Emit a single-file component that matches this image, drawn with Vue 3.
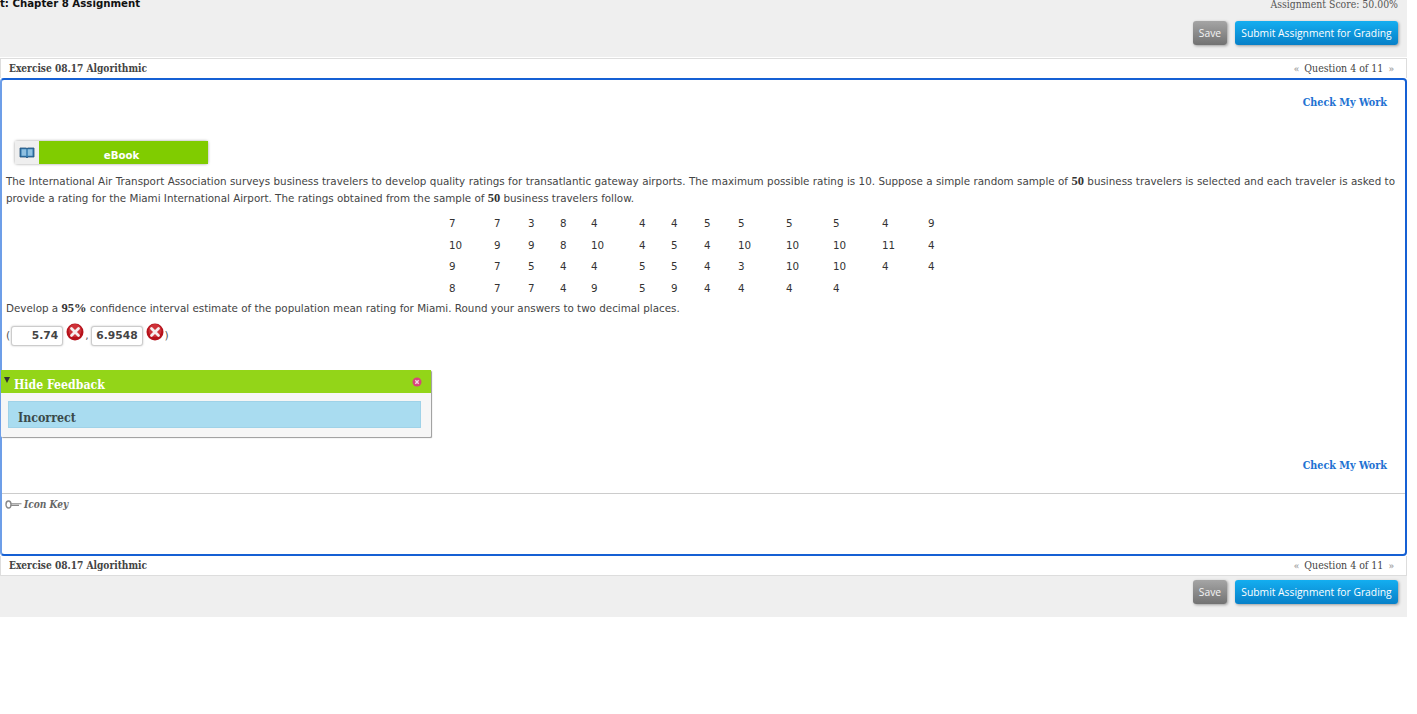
<script setup>
const rows = [
  ['7','7','3','8','4','4','4','5','5','5','5','4','9'],
  ['10','9','9','8','10','4','5','4','10','10','10','11','4'],
  ['9','7','5','4','4','5','5','4','3','10','10','4','4'],
  ['8','7','7','4','9','5','9','4','4','4','4','','']
]
const colWidths = [45,34,32,31,48,32,33,34,48,47,49,46,30]
</script>

<template>
  <div class="page">
    <header class="band top">
      <div class="title-row">
        <span class="assignment">t: Chapter 8 Assignment</span>
        <span class="score">Assignment Score: 50.00%</span>
      </div>
      <div class="actions">
        <button class="btn save">Save</button>
        <button class="btn submit">Submit Assignment for Grading</button>
      </div>
    </header>

    <div class="qbar first">
      <span class="exercise">Exercise 08.17 Algorithmic</span>
      <span class="qnav"><i class="arr">«</i> Question 4 of 11 <i class="arr">»</i></span>
    </div>

    <main class="panel">
      <div class="check-row"><a class="check">Check My Work</a></div>

      <div class="ebook">
        <span class="ebook-icon">
          <svg width="16" height="14" viewBox="0 0 16 14">
            <path d="M1 2h6.500l.5 1 .5-1H15v9H9l-1 1-1-1H1z" fill="#2f77ad" stroke="#24527a" stroke-width=".8"/>
            <path d="M2.500 3.200h4.800v6.600H2.500zM8.700 3.200h4.800v6.600H8.700z" fill="#8fc0e0"/>
          </svg>
        </span>
        <span class="ebook-label">eBook</span>
      </div>

      <p class="text para">The International Air Transport Association surveys business travelers to develop quality ratings for transatlantic gateway airports. The maximum possible rating is 10. Suppose a simple random sample of <b>50</b> business travelers is selected and each traveler is asked to provide a rating for the Miami International Airport. The ratings obtained from the sample of <b>50</b> business travelers follow.</p>

      <table class="data">
        <colgroup><col v-for="(w, i) in colWidths" :key="i" :style="{ width: w + 'px' }" /></colgroup>
        <tbody>
          <tr v-for="(row, r) in rows" :key="r">
            <td v-for="(v, c) in row" :key="c">{{ v }}</td>
          </tr>
        </tbody>
      </table>

      <p class="text develop">Develop a <b>95%</b> confidence interval estimate of the population mean rating for Miami. Round your answers to two decimal places.</p>

      <div class="answers">
        <span class="paren">(</span>
        <span class="input w1">5.74</span>
        <svg class="bad" width="18" height="18" viewBox="0 0 18 18">
          <circle cx="9" cy="9" r="8.500" fill="#b5121b"/>
          <circle cx="9" cy="7.500" r="6.500" fill="#e0464c" opacity=".6"/>
          <path d="M5.500 5.500l7 7M12.500 5.500l-7 7" stroke="#f6eeee" stroke-width="2.800" stroke-linecap="round"/>
        </svg>
        <span class="paren comma">,</span>
        <span class="input w2">6.9548</span>
        <svg class="bad" width="18" height="18" viewBox="0 0 18 18">
          <circle cx="9" cy="9" r="8.500" fill="#b5121b"/>
          <circle cx="9" cy="7.500" r="6.500" fill="#e0464c" opacity=".6"/>
          <path d="M5.500 5.500l7 7M12.500 5.500l-7 7" stroke="#f6eeee" stroke-width="2.800" stroke-linecap="round"/>
        </svg>
        <span class="paren close-p">)</span>
      </div>

      <section class="feedback">
        <div class="fb-head">
          <span class="tri"></span>
          <span class="fb-title">Hide Feedback</span>
          <svg class="fb-close" width="10" height="10" viewBox="0 0 10 10">
            <circle cx="5" cy="5" r="4.500" fill="#d8447c"/>
            <path d="M3.300 3.300l3.400 3.400M6.700 3.300L3.300 6.700" stroke="#f3d6e2" stroke-width="1.400"/>
          </svg>
        </div>
        <div class="fb-body">
          <div class="fb-msg">Incorrect</div>
        </div>
      </section>

      <div class="check-row lower"><a class="check">Check My Work</a></div>

      <div class="icon-key">
        <svg width="17" height="9" viewBox="0 0 17 9">
          <ellipse cx="3.500" cy="4.500" rx="2.500" ry="3.500" fill="none" stroke="#8a8a8a" stroke-width="1.400"/>
          <path d="M6 3.800h10.500M6 5.400h8" stroke="#8a8a8a" stroke-width="1.100"/>
        </svg>
        <em>Icon Key</em>
      </div>
    </main>

    <div class="qbar last">
      <span class="exercise">Exercise 08.17 Algorithmic</span>
      <span class="qnav"><i class="arr">«</i> Question 4 of 11 <i class="arr">»</i></span>
    </div>

    <footer class="band bottom">
      <div class="actions">
        <button class="btn save">Save</button>
        <button class="btn submit">Submit Assignment for Grading</button>
      </div>
    </footer>
  </div>
</template>

<style>
html, body { background: #fff; margin: 0; }
</style>

<style scoped>
.page { width: 1407px; font-family: "DejaVu Sans", sans-serif; color: #333; }
.band { background: #efefef; }
.top { height: 57px; overflow: hidden; }
.title-row { display: flex; justify-content: space-between; height: 21px; padding-right: 9px; }
.assignment { font-size: 10.200px; font-weight: 700; color: #111; line-height: 8px; }
.score { font-family: "DejaVu Serif Condensed", "DejaVu Serif", serif; font-size: 10.400px; color: #555; line-height: 9px; }
.actions { display: flex; justify-content: flex-end; gap: 8px; padding-right: 9px; }
.btn {
  height: 24px; border: 0; padding: 0; border-radius: 3px; color: #fff;
  font-family: "Open Sans", sans-serif; font-size: 10.300px; line-height: 24px;
  box-shadow: 1px 1px 3px rgba(0,0,0,.35);
}
.save { width: 34px; background: linear-gradient(#a5a5a5, #727272); color: #f4f4f4; }
.submit { width: 163px; background: linear-gradient(#14aef0, #0780c8); }
.bottom { height: 41px; padding-top: 4px; box-sizing: border-box; }
.qbar {
  height: 20px; box-sizing: border-box; background: #fff; display: flex; justify-content: space-between;
  align-items: center; padding: 0 10px 1px 8px; border-right: 1px solid #ddd; border-left: 1px solid #ddd;
  font-family: "DejaVu Serif Condensed", "DejaVu Serif", serif; font-size: 10.500px; color: #444;
}
.qbar.first { margin-top: 1px; border-top: 1px solid #ddd; }
.qbar.last { border-bottom: 1px solid #ddd; }
.exercise { font-weight: 700; color: #444; font-size: 10.100px; }
.arr { font-style: normal; color: #aaa; font-size: 10px; font-weight: 700; margin: 0 2px; }
.panel {
  height: 478px; box-sizing: border-box; border: 2px solid #1560d4; border-left-color: #6d9ee8;
  border-radius: 4px; background: #fff; display: flex; flex-direction: column;
}
.check-row { display: flex; justify-content: flex-end; padding: 15px 18px 0 0; height: 46px; box-sizing: border-box; }
.check { font-family: "DejaVu Serif Condensed", "DejaVu Serif", serif; font-size: 10.700px; font-weight: 700; color: #2272d2; line-height: 16px; }
.ebook {
  margin: 15px 0 0 13px; width: 193px; height: 23px; display: flex; border-radius: 2px;
  box-shadow: 0 0 3px rgba(0,0,0,.4);
}
.ebook-icon { width: 24px; background: #efefef; display: flex; align-items: center; justify-content: center; }
.ebook-label {
  flex: 1; background: #80cc00; color: #fff; font-size: 10.200px; font-weight: 700;
  text-align: center; line-height: 30px; height: 23px; overflow: hidden;
  padding-right: 4px;
}
.text { margin: 0; font-size: 10.350px; line-height: 17px; color: #444; }
.text b { font-family: "Liberation Serif", serif; font-size: 12.500px; color: #333; }
.para { margin: 9px 0 0 4px; width: 1389px; text-align: justify; }
.data { margin: 5px 0 0 445px; width: 509px; border-collapse: collapse; table-layout: fixed; font-size: 10.300px; color: #333; }
.data td { padding: 0 0 0 2px; height: 21.700px; white-space: nowrap; }
.develop { margin: 1px 0 0 4px; }
.answers { display: flex; align-items: flex-start; margin: 9px 0 0 4px; height: 20px; font-size: 10.700px; color: #555; }
.paren { line-height: 20px; }
.input {
  height: 20px; box-sizing: border-box; border: 1px solid #ccc; border-radius: 3px; background: #fff;
  box-shadow: 0 0 2px rgba(0,0,0,.25); text-align: right; padding-right: 4px; line-height: 18px;
  font-weight: 700; color: #444;
}
.w1 { width: 52px; margin-left: 1px; }
.w2 { width: 52px; margin-left: 2px; }
.bad { margin: -3px 0 0 3px; }
.comma { margin-left: 1px; }
.close-p { margin-left: 1px; }
.feedback {
  margin: 24px 0 0 -1px; width: 430px; height: 67px; background: #f6f6f6; border-radius: 1px;
  box-shadow: 1px 1px 1px #999;
}
.fb-head { height: 23px; background: #93d518; display: flex; align-items: flex-start; padding-left: 3px; }
.tri {
  width: 0; height: 0; margin-top: 7px; border-left: 3px solid transparent; border-right: 3px solid transparent;
  border-top: 6px solid #333;
}
.fb-title { font-family: "DejaVu Serif Condensed", "DejaVu Serif", serif; font-weight: 700; font-size: 12.200px; color: #fff; margin: 8px 0 0 4px; line-height: 15px; flex: 1; }
.fb-close { margin: 7px 9px 0 0; }
.fb-body { padding: 8px 10px 0 7px; }
.fb-msg {
  height: 27px; box-sizing: border-box; background: #a9dcf0; border: 1px solid #9fd2e8; padding-left: 9px;
  font-family: "DejaVu Serif Condensed", "DejaVu Serif", serif; font-weight: 700; font-size: 12.300px; line-height: 31px; color: #3a4a4a; overflow: hidden;
}
.lower { padding-top: 21px; height: 57px; border-bottom: 1px solid #ccc; }
.icon-key { display: flex; align-items: center; gap: 2px; padding: 4px 0 0 3px; font-family: "DejaVu Serif Condensed", "DejaVu Serif", serif; font-size: 10.100px; font-weight: 700; color: #666; line-height: 14px; }
</style>
